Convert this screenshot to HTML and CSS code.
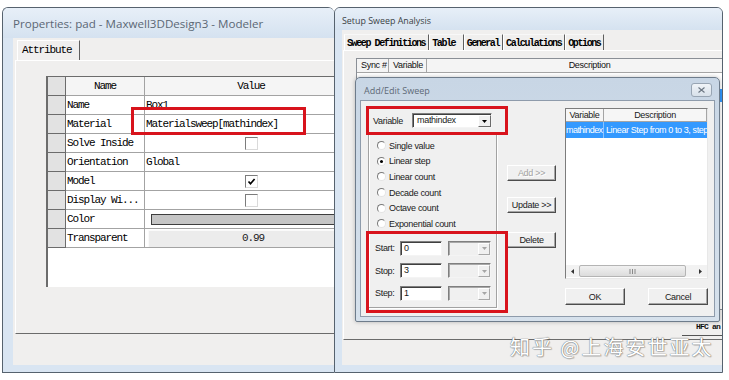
FILE: index.html
```html
<!DOCTYPE html>
<html lang="zh-CN">
<head>
  <meta charset="UTF-8">
  <title>Material sweep setup</title>
  <link rel="stylesheet" href="styles.css">
</head>
<body>
<div class="screen">

  <!-- Properties window -->
  <section class="win win-props">
    <div class="titlebar">Properties: pad - Maxwell3DDesign3 - Modeler</div>
    <div class="win-body">
      <div class="tabs"><span class="tab">Attribute</span></div>
      <div class="tab-panel">
        <div class="prop-grid">
          <div class="rh"></div><div class="ch">Name</div><div class="ch">Value</div>
          <div class="rh"></div><div class="c">Name</div><div class="c">Box1</div>
          <div class="rh"></div><div class="c">Material</div><div class="c">Materialsweep[mathindex]</div>
          <div class="rh"></div><div class="c">Solve Inside</div><div class="c mid"><span class="chk"></span></div>
          <div class="rh"></div><div class="c">Orientation</div><div class="c">Global</div>
          <div class="rh"></div><div class="c">Model</div>
          <div class="c mid"><span class="chk"><svg width="9" height="9" viewBox="0 0 9 9"><polyline points="1.5,4.5 3.5,6.8 7.6,2" fill="none" stroke="#000" stroke-width="1.7"/></svg></span></div>
          <div class="rh"></div><div class="c">Display Wi...</div><div class="c mid"><span class="chk"></span></div>
          <div class="rh"></div><div class="c">Color</div><div class="c"><span class="swatch"></span></div>
          <div class="rh"></div><div class="c">Transparent</div><div class="c"><span class="num-btn">0.99</span></div>
        </div>
      </div>
    </div>
    <div class="mark mark-material"></div>
  </section>

  <!-- Setup Sweep Analysis window -->
  <section class="win win-sweep">
    <div class="titlebar">Setup Sweep Analysis</div>
    <div class="win-body">
      <div class="tabs">
        <span class="tab">Sweep Definitions</span>
        <span class="tab">Table </span>
        <span class="tab">General</span>
        <span class="tab">Calculations</span>
        <span class="tab">Options</span>
      </div>
      <div class="tab-panel">
        <div class="sweep-list">
          <div class="list-head">
            <span class="col-sync">Sync #</span>
            <span class="col-var">Variable</span>
            <span class="col-desc">Description</span>
          </div>
          <div class="list-row"></div>
        </div>
        <div class="hfc">HFC an</div>
      </div>
    </div>

    <!-- Add/Edit Sweep dialog -->
    <div class="dialog">
      <div class="dlg-title">
        Add/Edit Sweep
        <span class="dlg-close"><svg width="7" height="6" viewBox="0 0 7 6"><path d="M0.5 0.5 L6.5 5.5 M6.5 0.5 L0.5 5.5" stroke="#6b7682" stroke-width="1.1"/></svg></span>
      </div>
      <div class="dlg-content">
        <div class="dlg-left">
          <div class="var-row">
            <span class="lbl">Variable</span>
            <span class="combo">
              <span class="combo-text">mathindex</span>
              <span class="drop"><svg width="5" height="3" viewBox="0 0 5 3"><polygon points="0,0 5,0 2.5,3" fill="#000"/></svg></span>
            </span>
          </div>
          <div class="group">
            <div class="radio"><span class="dot"></span>Single value</div>
            <div class="radio on"><span class="dot"></span>Linear step</div>
            <div class="radio"><span class="dot"></span>Linear count</div>
            <div class="radio"><span class="dot"></span>Decade count</div>
            <div class="radio"><span class="dot"></span>Octave count</div>
            <div class="radio"><span class="dot"></span>Exponential count</div>
            <div class="fields">
              <div class="field">
                <span class="flbl">Start:</span><span class="edit">0</span>
                <span class="combo off"><span class="drop"><svg width="5" height="3" viewBox="0 0 5 3"><polygon points="0,0 5,0 2.5,3" fill="#a6a6a6"/></svg></span></span>
              </div>
              <div class="field">
                <span class="flbl">Stop:</span><span class="edit">3</span>
                <span class="combo off"><span class="drop"><svg width="5" height="3" viewBox="0 0 5 3"><polygon points="0,0 5,0 2.5,3" fill="#a6a6a6"/></svg></span></span>
              </div>
              <div class="field">
                <span class="flbl">Step:</span><span class="edit">1</span>
                <span class="combo off"><span class="drop"><svg width="5" height="3" viewBox="0 0 5 3"><polygon points="0,0 5,0 2.5,3" fill="#a6a6a6"/></svg></span></span>
              </div>
            </div>
          </div>
        </div>

        <div class="dlg-mid">
          <span class="btn disabled btn-add">Add &gt;&gt;</span>
          <span class="btn btn-update">Update &gt;&gt;</span>
          <span class="btn btn-delete">Delete</span>
        </div>

        <div class="dlg-right">
          <div class="def-list">
            <div class="def-head"><span class="dv">Variable</span><span class="dd">Description</span></div>
            <div class="def-row"><span class="dv">mathindex</span><span class="dd">Linear Step from 0 to 3, step</span></div>
            <div class="hscroll">
              <span class="arrow"><svg width="3" height="5" viewBox="0 0 3 5"><polygon points="3,0 3,5 0,2.5" fill="#333"/></svg></span>
              <span class="thumb"><svg width="7" height="5" viewBox="0 0 7 5"><path d="M1 0V5M3.5 0V5M6 0V5" stroke="#888" stroke-width="1"/></svg></span>
              <span class="track"></span>
              <span class="arrow"><svg width="3" height="5" viewBox="0 0 3 5"><polygon points="0,0 0,5 3,2.5" fill="#333"/></svg></span>
            </div>
          </div>
          <div class="dlg-actions">
            <span class="btn">OK</span>
            <span class="btn">Cancel</span>
          </div>
        </div>
      </div>
      <div class="mark mark-var"></div>
      <div class="mark mark-range"></div>
    </div>
  </section>

  <div class="watermark">知乎 @上海安世亚太</div>
</div>
</body>
</html>
```

FILE: styles.css
```css
* {
  box-sizing: border-box;
}

body {
  margin: 0;
  width: 729px;
  height: 380px;
  overflow: hidden;
  background: #fff;
  font-family: "Liberation Sans", Arial, sans-serif;
  font-size: 9px;
  letter-spacing: -0.3px;
  color: #111;
}

.screen {
  position: relative;
  display: flex;
  align-items: flex-start;
  height: 380px;
  padding: 7px 0 0 2px;
}

/* Window chrome */
.win {
  position: relative;
  display: flex;
  flex-direction: column;
  height: 366px;
  border: 1px solid #56626e;
  border-radius: 6px 6px 0 0;
  background: #d9e5f2;
  overflow: hidden;
}

.win-props {
  width: 332px;
  border-right: none;
}

.win-sweep {
  width: 389px;
}

.titlebar {
  flex: none;
  white-space: nowrap;
  font-family: "Open Sans", "Liberation Sans", sans-serif;
  letter-spacing: 0;
  background: linear-gradient(#e7eff8, #d5e2f0);
}

.win-props .titlebar {
  height: 30px;
  padding: 8px 0 0 10px;
  font-size: 11.6px;
  color: #5b6774;
}

.win-sweep .titlebar {
  height: 22px;
  padding: 6px 0 0 7px;
  font-size: 8.9px;
  color: #3a3f45;
}

.win-body {
  flex: 1;
  display: flex;
  flex-direction: column;
  background: #f0efee;
}

.win-props .win-body {
  margin: 0 0 7px 10px;
  padding-top: 2px;
}

.win-sweep .win-body {
  margin: 0 0 7px 7px;
  padding-top: 4px;
}

/* Tabs */
.tabs {
  display: flex;
  font-family: "Liberation Mono", "DejaVu Sans Mono", monospace;
  color: #000;
}

.tab {
  white-space: pre;
  border-top: 1px solid #fff;
  border-left: 1px solid #fff;
  border-right: 1px solid #5e5e5e;
}

.win-props .tabs {
  margin-left: 4px;
  height: 20px;
}

.win-props .tab {
  width: 63px;
  padding: 3px 0 0 4px;
  font-size: 11px;
  letter-spacing: -1.1px;
}

.win-sweep .tabs {
  margin-left: 2px;
  height: 16px;
}

.win-sweep .tab {
  padding: 3px 3px 0 2px;
  font-size: 10px;
  font-weight: bold;
  letter-spacing: -1.4px;
  border-top-color: #f8f8f8;
}

.tab-panel {
  position: relative;
  border-top: 1px solid #fff;
  border-left: 1px solid #fff;
  border-bottom: 1px solid #6b6b6b;
}

.win-props .tab-panel {
  margin-left: 2px;
  height: 274px;
  padding: 15px 0 0 30px;
}

.win-sweep .tab-panel {
  margin-left: 1px;
  height: 290px;
  padding: 7px 0 0 12px;
}

/* Property grid */
.prop-grid {
  display: grid;
  grid-template-columns: 18px 79px 1fr;
  grid-auto-rows: 19px;
  align-content: start;
  width: 312px;
  height: 211px;
  background: #fff;
  border-left: 2px solid #6c6c6c;
  border-top: 1px solid #6c6c6c;
  font-family: "Liberation Mono", "DejaVu Sans Mono", monospace;
  font-size: 11px;
  letter-spacing: -1.1px;
  color: #000;
}

.prop-grid > div {
  border-right: 1px solid #a3a3a3;
  border-bottom: 1px solid #a3a3a3;
  line-height: 18px;
  white-space: nowrap;
  overflow: hidden;
}

.prop-grid .rh {
  background: #e2e2e2;
  border-right-color: #6c6c6c;
  border-bottom-color: #6c6c6c;
}

.prop-grid .ch {
  background: #f5f5f5;
  text-align: center;
}

.prop-grid .c {
  padding-left: 1px;
}

.prop-grid .mid {
  display: flex;
  align-items: center;
  justify-content: center;
}

.chk {
  display: flex;
  align-items: center;
  justify-content: center;
  width: 13px;
  height: 13px;
  background: #fff;
  border: 1px solid;
  border-color: #7c7c7c #dadada #dadada #7c7c7c;
}

.swatch {
  display: block;
  height: 11px;
  margin: 4px 0 0 5px;
  background: #c5c5c5;
  border: 1px solid #3e3e3e;
}

.num-btn {
  display: block;
  height: 17px;
  margin: 1px 0 0 2px;
  background: #ececec;
  border-top: 1px solid #fafafa;
  border-left: 1px solid #fafafa;
  line-height: 15px;
  text-align: center;
  color: #222;
}

/* Sweep list behind the dialog */
.sweep-list {
  width: 394px;
  height: 252px;
  background: #fff;
  border: 1px solid #8a8f96;
}

.list-head {
  display: flex;
  height: 14px;
  line-height: 13px;
  white-space: nowrap;
  background: #f4f4f4;
  border-bottom: 1px solid #a5a5a5;
}

.list-head span {
  border-right: 1px solid #a5a5a5;
  padding-left: 4px;
}

.col-sync { width: 32px; }
.col-var { width: 38px; }
.col-desc { flex: 1; text-align: center; }

.list-row {
  height: 13px;
  margin-top: 16px;
  background: #3399ff;
}

.hfc {
  width: 60px;
  height: 22px;
  margin: 4px 0 0 326px;
  padding: 9px 0 0 14px;
  border-bottom: 1px solid #555;
  font-family: "Liberation Mono", monospace;
  font-size: 8px;
  font-weight: bold;
  letter-spacing: -0.8px;
  line-height: 8px;
}

/* Add/Edit Sweep dialog */
.dialog {
  position: absolute;
  left: 20px;
  top: 69px;
  width: 365px;
  height: 245px;
  border: 1px solid #6e7c8b;
  border-radius: 5px 5px 2px 2px;
  background: linear-gradient(#c8d6e5, #d6e1ec);
  box-shadow: 0 0 4px rgba(0, 0, 0, 0.25);
}

.dlg-title {
  position: relative;
  height: 22px;
  padding: 6px 0 0 8px;
  font-family: "Open Sans", "Liberation Sans", sans-serif;
  font-size: 9px;
  letter-spacing: 0;
  color: #5d6976;
}

.dlg-close {
  position: absolute;
  right: 7px;
  top: 5px;
  display: flex;
  align-items: center;
  justify-content: center;
  width: 21px;
  height: 14px;
  border: 1px solid #98a5b3;
  border-radius: 3px;
  background: linear-gradient(#f0f4f8, #d8e1ea);
}

.dlg-content {
  display: flex;
  align-items: flex-start;
  height: 217px;
  margin: 0 4px 4px;
  padding-left: 7px;
  background: #f0f0f0;
  border: 1px solid #8e9bab;
  color: #1a1a1a;
}

.dlg-left {
  width: 129px;
  padding-top: 12px;
}

.var-row {
  display: flex;
  align-items: center;
  height: 15px;
}

.lbl {
  width: 44px;
  padding-left: 5px;
}

.combo {
  display: flex;
  align-items: stretch;
  width: 80px;
  height: 15px;
  background: #fff;
  border: 1px solid;
  border-color: #7f7f7f #f4f4f4 #f4f4f4 #7f7f7f;
  box-shadow: inset 1px 1px 0 #3f3f3f;
}

.combo-text {
  flex: 1;
  padding: 1px 0 0 4px;
}

.drop {
  display: flex;
  align-items: center;
  justify-content: center;
  width: 13px;
  margin: 1px 0 0;
  background: #f0f0f0;
  border: 1px solid;
  border-color: #fff #6a6a6a #6a6a6a #fff;
}

.group {
  height: 175px;
  margin-top: 5px;
  padding-top: 4px;
  border: 1px solid #a2a2a2;
  box-shadow: inset 1px 1px 0 #fff, 1px 1px 0 #fff;
}

.radio {
  display: flex;
  align-items: center;
  gap: 3px;
  height: 15.6px;
  margin-left: 8px;
}

.dot {
  position: relative;
  width: 9px;
  height: 9px;
  border-radius: 50%;
  background: #fff;
  border: 1px solid;
  border-color: #7a7a7a #e4e4e4 #e4e4e4 #7a7a7a;
}

.radio.on .dot::after {
  content: "";
  position: absolute;
  left: 2px;
  top: 2px;
  width: 3px;
  height: 3px;
  border-radius: 50%;
  background: #000;
}

.fields {
  display: flex;
  flex-direction: column;
  gap: 7.5px;
  margin: 9px 0 0 6px;
}

.field {
  display: flex;
  align-items: center;
  height: 15px;
}

.flbl {
  width: 25px;
}

.edit {
  width: 42px;
  height: 15px;
  margin-right: 6px;
  padding: 1px 0 0 3px;
  background: #fff;
  border: 1px solid;
  border-color: #7f7f7f #f4f4f4 #f4f4f4 #7f7f7f;
  box-shadow: inset 1px 1px 0 #3f3f3f;
}

.combo.off {
  width: 43px;
  justify-content: flex-end;
  background: #f0f0f0;
  box-shadow: inset 1px 1px 0 #a8a8a8;
}

.combo.off .drop {
  width: 12px;
  border-color: #fff #a8a8a8 #a8a8a8 #fff;
}

.dlg-mid {
  display: flex;
  flex-direction: column;
  width: 49px;
  margin-left: 10px;
}

.btn {
  display: flex;
  align-items: center;
  justify-content: center;
  height: 16px;
  background: #f0f0f0;
  border: 1px solid;
  border-color: #fff #4c4c4c #4c4c4c #fff;
  box-shadow: inset -1px -1px 0 #a5a5a5;
  white-space: nowrap;
}

.btn.disabled {
  color: #a3a3a3;
  text-shadow: 1px 1px 0 #fff;
}

.btn-add { margin-top: 64px; }
.btn-update { margin-top: 16px; }
.btn-delete { margin-top: 19px; }

.dlg-right {
  width: 143px;
  margin-left: 9px;
  padding-top: 7px;
}

.def-list {
  display: flex;
  flex-direction: column;
  height: 171px;
  background: #fff;
  border: 1px solid;
  border-color: #7c7c7c #e8e8e8 #e8e8e8 #7c7c7c;
  overflow: hidden;
}

.def-head,
.def-row {
  display: flex;
  white-space: nowrap;
}

.def-head {
  height: 13px;
  line-height: 12px;
  background: #f6f6f6;
  border-bottom: 1px solid #a5a5a5;
}

.def-head span {
  border-right: 1px solid #a5a5a5;
  text-align: center;
}

.dv {
  width: 38px;
  flex: none;
}

.dd {
  flex: 1;
  min-width: 0;
}

.def-row {
  height: 16px;
  line-height: 16px;
  background: #3399ff;
  color: #fff;
}

.def-row .dv {
  letter-spacing: -0.55px;
  border-right: 1px solid #8cc4ff;
}

.def-row .dd {
  padding-left: 2px;
  letter-spacing: -0.4px;
}

.hscroll {
  display: flex;
  height: 12px;
  margin-top: auto;
  margin-bottom: 1px;
  background: #f2f2f2;
}

.arrow {
  display: flex;
  align-items: center;
  justify-content: center;
  width: 13px;
}

.thumb {
  display: flex;
  align-items: center;
  justify-content: center;
  width: 107px;
  border: 1px solid #b4b4b4;
  border-radius: 2px;
  background: linear-gradient(#f1f1f1, #dcdcdc);
}

.track {
  flex: 1;
}

.dlg-actions {
  display: flex;
  justify-content: space-between;
  margin-top: 9px;
}

.dlg-actions .btn {
  width: 60px;
  height: 17px;
}

/* Red annotation boxes */
.mark {
  position: absolute;
  border: 3px solid #d8131c;
}

.mark-material {
  left: 128px;
  top: 99px;
  width: 175px;
  height: 28px;
}

.mark-var {
  left: 10px;
  top: 28px;
  width: 142px;
  height: 29px;
}

.mark-range {
  left: 10px;
  top: 153px;
  width: 142px;
  height: 82px;
}

/* Site watermark */
.watermark {
  position: absolute;
  left: 510px;
  top: 334px;
  font-family: "Noto Sans CJK SC", sans-serif;
  font-size: 20px;
  letter-spacing: 2px;
  line-height: 26px;
  white-space: nowrap;
  color: #fff;
  text-shadow: 0 0 1px #6f6f6f, 0 0 1px #6f6f6f, 1px 1px 1px rgba(0, 0, 0, 0.2);
}
```
